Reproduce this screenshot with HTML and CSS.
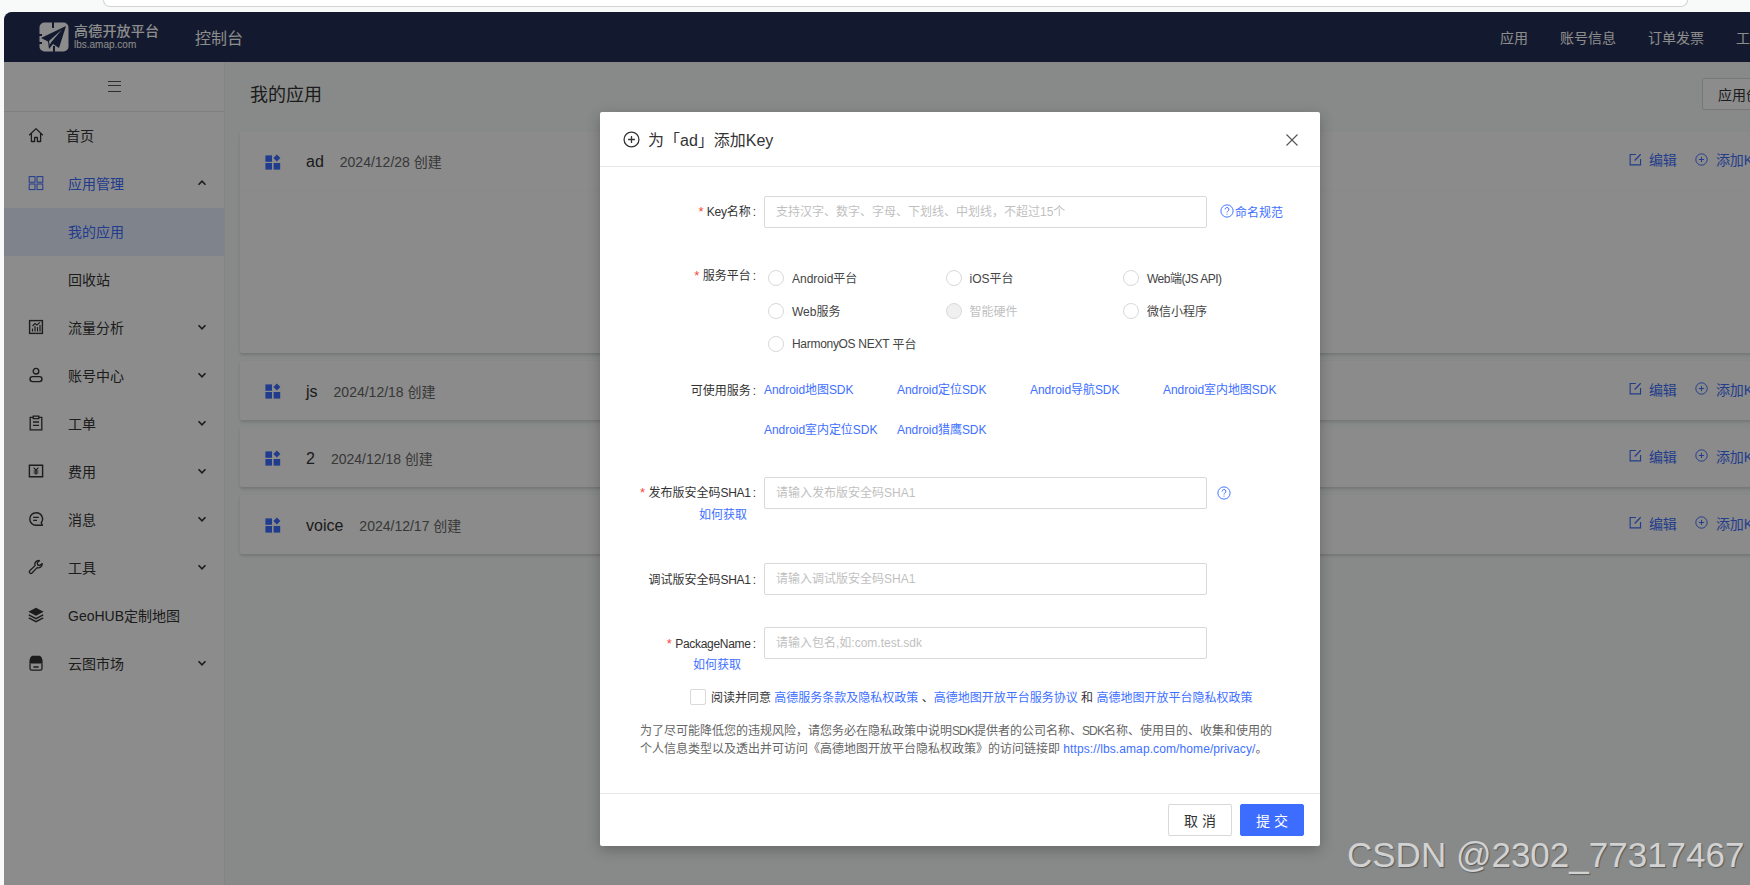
FILE: index.html
```html
<!DOCTYPE html>
<html lang="zh-CN">
<head>
<meta charset="utf-8">
<title>我的应用</title>
<link rel="stylesheet" href="styles.css">
</head>
<body>
<svg class="sprite" aria-hidden="true">
  <symbol id="i-home" viewBox="0 0 16 16"><path d="M1.2 8.2 8 1.6l6.8 6.6M3.4 6.6v7.9h3.2v-4h2.8v4h3.2V6.6" fill="none" stroke="currentColor" stroke-width="1.3" stroke-linejoin="round"/></symbol>
  <symbol id="i-apps" viewBox="0 0 16 16"><g fill="none" stroke="currentColor" stroke-width="1"><rect x="1.2" y="1.6" width="5.8" height="5.6"/><rect x="9" y="1.6" width="5.8" height="5.6"/><rect x="1.2" y="9" width="5.8" height="5.6"/><rect x="9" y="9" width="5.8" height="5.6"/></g></symbol>
  <symbol id="i-chart" viewBox="0 0 16 16"><rect x="1.6" y="1.6" width="12.8" height="12.8" fill="none" stroke="currentColor" stroke-width="1.4"/><path d="M4.5 12.5V9.5M7 12.5V7M9.5 12.5V8M12 12.5V6M4.5 7l2.5-2.4 2 1.4 3-2.6" fill="none" stroke="currentColor" stroke-width="1.2"/></symbol>
  <symbol id="i-user" viewBox="0 0 16 16"><circle cx="8" cy="4.2" r="2.8" fill="none" stroke="currentColor" stroke-width="1.4"/><rect x="2" y="9.6" width="12" height="5" rx="2.5" fill="none" stroke="currentColor" stroke-width="1.4"/></symbol>
  <symbol id="i-order" viewBox="0 0 16 16"><path d="M5 2.4H2.2v12.4h11.6V2.4H11M5.2 1.2h5.6v2.4H5.2zM5 7h6M5 10.4h6" fill="none" stroke="currentColor" stroke-width="1.3"/></symbol>
  <symbol id="i-fee" viewBox="0 0 16 16"><path d="M1.4 2.2h13.2v11.6H1.4z" fill="none" stroke="currentColor" stroke-width="1.4"/><path d="M5.6 4.6 8 7.2l2.4-2.6M8 7.2v4.6M5.6 8h4.8M5.6 10h4.8" fill="none" stroke="currentColor" stroke-width="1.1"/></symbol>
  <symbol id="i-msg" viewBox="0 0 16 16"><path d="M8 1.8a6.2 6.2 0 1 0 0 12.4h6.4l-1.2-2.4A6.2 6.2 0 0 0 8 1.8z" fill="none" stroke="currentColor" stroke-width="1.4" stroke-linejoin="round"/><path d="M5.2 6.4h5.6M5.2 9.4h3.8" fill="none" stroke="currentColor" stroke-width="1.3"/></symbol>
  <symbol id="i-tool" viewBox="0 0 16 16"><path d="M14.2 4.6a3.8 3.8 0 0 1-5 4L4 14a1.6 1.6 0 0 1-2.3-2.2l5.4-5.2a3.8 3.8 0 0 1 4.4-5L9.2 3.9l.5 2.1 2.1.5z" fill="none" stroke="currentColor" stroke-width="1.3" stroke-linejoin="round"/></symbol>
  <symbol id="i-layer" viewBox="0 0 16 16"><path d="M8 .8 15.6 4.8 8 8.8.4 4.8z" fill="currentColor"/><path d="M.8 7.8 8 11.6l7.2-3.8M.8 10.8 8 14.6l7.2-3.8" fill="none" stroke="currentColor" stroke-width="1.4"/></symbol>
  <symbol id="i-store" viewBox="0 0 16 16"><path d="M1.4 7C1.4 2.6 3.4.8 5.2.8h5.6c1.8 0 3.8 1.8 3.8 6.2v1.6H1.4z" fill="currentColor"/><path d="M2 8.4v5c0 1 .8 1.8 1.8 1.8h8.4c1 0 1.8-.8 1.8-1.8v-5M5.4 12h5.2" fill="none" stroke="currentColor" stroke-width="1.3"/></symbol>
  <symbol id="i-grid" viewBox="0 0 16 16"><rect x="0.4" y="1.4" width="6.6" height="6.4" fill="currentColor"/><rect x="0.4" y="9" width="6.6" height="6.6" fill="currentColor"/><rect x="8.6" y="9" width="6.6" height="6.6" fill="currentColor"/><path d="M11.9 0.4 15.4 4 11.9 7.6 8.4 4z" fill="currentColor"/></symbol>
  <symbol id="i-edit" viewBox="0 0 16 16"><path d="M8.5 1.8H1.4v12.8h12.8V7.5" fill="none" stroke="currentColor" stroke-width="1.4"/><path d="M7 9.2 14.4 1.6" fill="none" stroke="currentColor" stroke-width="1.5"/></symbol>
  <symbol id="i-plus" viewBox="0 0 16 16"><circle cx="8" cy="8" r="7" fill="none" stroke="currentColor" stroke-width="1.2"/><path d="M4.8 8h6.4M8 4.8v6.4" fill="none" stroke="currentColor" stroke-width="1.2"/></symbol>
  <symbol id="i-help" viewBox="0 0 16 16"><circle cx="8" cy="8" r="7" fill="none" stroke="currentColor" stroke-width="1.1"/><path d="M5.8 6.2A2.2 2.2 0 1 1 8.9 8.2c-.6.3-.9.7-.9 1.5M8 11v1.1" fill="none" stroke="currentColor" stroke-width="1.1"/></symbol>
  <symbol id="i-down" viewBox="0 0 10 10"><path d="M1.5 3.2 5 6.8l3.5-3.6" fill="none" stroke="currentColor" stroke-width="1.6"/></symbol>
  <symbol id="i-up" viewBox="0 0 10 10"><path d="M1.5 6.8 5 3.2l3.5 3.6" fill="none" stroke="currentColor" stroke-width="1.6"/></symbol>
</svg>

<div class="browser-strip"><div class="url-bar"></div></div>

<div class="app">
  <header class="topbar">
    <div class="logo">
      <svg class="logo-mark" viewBox="0 0 30 30" aria-hidden="true">
        <rect x="0.5" y="0.5" width="29" height="29" rx="5" fill="#fff"/>
        <path d="M27 4 2 16l7 3.5 1 7.5 4-5 6 4z" fill="#242f54"/>
        <path d="M23 7.5 10 19l.6 4 1.4-2.4z" fill="#fff"/>
        <path d="M14 0v6M15 24v6M0 13h3M0 21h3" stroke="#242f54" stroke-width="2"/>
      </svg>
      <div class="logo-text">
        <div class="logo-cn">高德开放平台</div>
        <div class="logo-en">lbs.amap.com</div>
      </div>
    </div>
    <div class="console">控制台</div>
    <nav class="topnav">
      <a>应用</a><a>账号信息</a><a>订单发票</a><a>工单</a>
    </nav>
  </header>

  <div class="body">
    <aside class="sidebar">
      <div class="collapse"><span class="burger"></span></div>
      <ul class="menu">
        <li class="item first"><svg class="ic"><use href="#i-home"/></svg><span>首页</span></li>
        <li class="item on"><svg class="ic"><use href="#i-apps"/></svg><span>应用管理</span><svg class="arrow"><use href="#i-up"/></svg></li>
        <li class="item sub selected"><span>我的应用</span></li>
        <li class="item sub"><span>回收站</span></li>
        <li class="item"><svg class="ic"><use href="#i-chart"/></svg><span>流量分析</span><svg class="arrow"><use href="#i-down"/></svg></li>
        <li class="item"><svg class="ic"><use href="#i-user"/></svg><span>账号中心</span><svg class="arrow"><use href="#i-down"/></svg></li>
        <li class="item"><svg class="ic"><use href="#i-order"/></svg><span>工单</span><svg class="arrow"><use href="#i-down"/></svg></li>
        <li class="item"><svg class="ic"><use href="#i-fee"/></svg><span>费用</span><svg class="arrow"><use href="#i-down"/></svg></li>
        <li class="item"><svg class="ic"><use href="#i-msg"/></svg><span>消息</span><svg class="arrow"><use href="#i-down"/></svg></li>
        <li class="item"><svg class="ic"><use href="#i-tool"/></svg><span>工具</span><svg class="arrow"><use href="#i-down"/></svg></li>
        <li class="item"><svg class="ic"><use href="#i-layer"/></svg><span>GeoHUB定制地图</span></li>
        <li class="item"><svg class="ic"><use href="#i-store"/></svg><span>云图市场</span><svg class="arrow"><use href="#i-down"/></svg></li>
      </ul>
    </aside>

    <main class="main">
      <div class="main-head">
        <h1 class="page-title">我的应用</h1>
        <button class="create-btn">应用创建</button>
      </div>
      <section class="card card-open">
        <div class="card-head">
          <svg class="card-ic"><use href="#i-grid"/></svg>
          <span class="name">ad</span><span class="date">2024/12/28 创建</span>
          <div class="actions"><svg class="act-ic"><use href="#i-edit"/></svg><a>编辑</a><svg class="act-ic add"><use href="#i-plus"/></svg><a>添加Key</a></div>
        </div>
      </section>
      <section class="card">
        <div class="card-head">
          <svg class="card-ic"><use href="#i-grid"/></svg>
          <span class="name">js</span><span class="date">2024/12/18 创建</span>
          <div class="actions"><svg class="act-ic"><use href="#i-edit"/></svg><a>编辑</a><svg class="act-ic add"><use href="#i-plus"/></svg><a>添加Key</a></div>
        </div>
      </section>
      <section class="card">
        <div class="card-head">
          <svg class="card-ic"><use href="#i-grid"/></svg>
          <span class="name">2</span><span class="date">2024/12/18 创建</span>
          <div class="actions"><svg class="act-ic"><use href="#i-edit"/></svg><a>编辑</a><svg class="act-ic add"><use href="#i-plus"/></svg><a>添加Key</a></div>
        </div>
      </section>
      <section class="card">
        <div class="card-head">
          <svg class="card-ic"><use href="#i-grid"/></svg>
          <span class="name">voice</span><span class="date">2024/12/17 创建</span>
          <div class="actions"><svg class="act-ic"><use href="#i-edit"/></svg><a>编辑</a><svg class="act-ic add"><use href="#i-plus"/></svg><a>添加Key</a></div>
        </div>
      </section>
    </main>
  </div>

  <div class="overlay"></div>

  <div class="modal">
    <div class="modal-head">
      <svg class="modal-ic"><use href="#i-plus"/></svg>
      <span class="modal-title">为「ad」添加Key</span>
      <svg class="close" viewBox="0 0 12 12"><path d="M.5.5l11 11M11.5.5l-11 11" fill="none" stroke="currentColor" stroke-width="1.1"/></svg>
    </div>
    <form class="form">
      <div class="row">
        <div class="lab"><label><i>*</i> <span class="tight">Key</span>名称<b>:</b></label></div>
        <div class="ctl">
          <input class="inp" placeholder="支持汉字、数字、字母、下划线、中划线，不超过15个">
          <a class="hint"><svg class="help"><use href="#i-help"/></svg>命名规范</a>
        </div>
      </div>
      <div class="row row-radio">
        <div class="lab lab-radio"><label><i>*</i> 服务平台<b>:</b></label></div>
        <div class="radios">
          <span class="radio"><em></em>Android平台</span>
          <span class="radio"><em></em>iOS平台</span>
          <span class="radio"><em></em><span class="tight-more">Web端(JS API)</span></span>
          <span class="radio"><em></em>Web服务</span>
          <span class="radio off"><em></em>智能硬件</span>
          <span class="radio"><em></em>微信小程序</span>
          <span class="radio"><em></em><span class="tight">HarmonyOS NEXT</span> 平台</span>
        </div>
      </div>
      <div class="row row-svc">
        <div class="lab lab-svc"><label>可使用服务<b>:</b></label></div>
        <div class="svcs">
          <a>Android地图SDK</a><a>Android定位SDK</a><a>Android导航SDK</a><a>Android室内地图SDK</a>
          <a>Android室内定位SDK</a><a>Android猎鹰SDK</a>
        </div>
      </div>
      <div class="row row-rel">
        <div class="lab">
          <label><i>*</i> 发布版安全码<span class="tight">SHA1</span><b>:</b></label>
          <a class="how how-a">如何获取</a>
        </div>
        <div class="ctl">
          <input class="inp" placeholder="请输入发布版安全码SHA1">
          <svg class="help help-solo"><use href="#i-help"/></svg>
        </div>
      </div>
      <div class="row row-dbg">
        <div class="lab"><label>调试版安全码<span class="tight">SHA1</span><b>:</b></label></div>
        <div class="ctl"><input class="inp" placeholder="请输入调试版安全码SHA1"></div>
      </div>
      <div class="row row-pkg">
        <div class="lab">
          <label><i>*</i> <span class="tight">PackageName</span><b>:</b></label>
          <a class="how how-b">如何获取</a>
        </div>
        <div class="ctl"><input class="inp" placeholder="请输入包名,如:com.test.sdk"></div>
      </div>
      <div class="agree">
        <span class="check"></span>
        <span class="agree-text">阅读并同意 <a>高德服务条款及隐私权政策</a> 、<a>高德地图开放平台服务协议</a> 和 <a>高德地图开放平台隐私权政策</a></span>
      </div>
      <p class="note">为了尽可能降低您的违规风险，请您务必在隐私政策中说明<span class="sdk">SDK</span>提供者的公司名称、<span class="sdk">SDK</span>名称、使用目的、收集和使用的个人信息类型以及透出并可访问《高德地图开放平台隐私权政策》的访问链接即 <a class="url">https://lbs.amap.com/home/privacy/</a>。</p>
    </form>
    <div class="modal-foot">
      <button class="btn">取 消</button>
      <button class="btn primary">提 交</button>
    </div>
  </div>
</div>

<div class="watermark">CSDN @2302_77317467</div>
</body>
</html>
```
FILE: styles.css
```css
* { box-sizing: border-box; }
html, body { margin: 0; height: 885px; overflow: hidden; }
body {
  background: #f8f9f9;
  font-family: "Liberation Sans", "Noto Sans CJK SC", sans-serif;
  font-size: 14px;
  color: #333;
  position: relative;
  width: 1750px;
}
a { color: #4070ff; text-decoration: none; }
ul { list-style: none; margin: 0; padding: 0; }
.sprite { display: none; }

.browser-strip { height: 12px; }
.url-bar {
  margin: 0 62px 0 103px;
  height: 7px;
  background: #fff;
  border: 1px solid #d4d4d4;
  border-top: 0;
  border-radius: 0 0 10px 10px;
}

.app {
  position: relative;
  margin-left: 4px;
  width: 1802px;
  height: 873px;
  border-top-left-radius: 8px;
  overflow: hidden;
  display: flex;
  flex-direction: column;
  background: #f7fbf9;
}

.topbar {
  height: 50px;
  flex: none;
  background: #242f54;
  display: flex;
  align-items: center;
  padding-left: 35px;
  color: #fff;
}
.logo { display: flex; align-items: center; gap: 5px; }
.logo-mark { width: 30px; height: 30px; display: block; }
.logo-text { width: 86px; margin-top: -1px; }
.logo-cn { font-size: 14px; line-height: 15px; font-weight: 500; letter-spacing: .2px; white-space: nowrap; }
.logo-en { font-size: 10px; line-height: 11px; white-space: nowrap; }
.console { font-size: 16px; margin-left: 35px; }
.topnav { margin-left: auto; padding-right: 42px; display: flex; gap: 32px; }
.topnav a { color: #fff; }

.body { flex: 1; display: flex; min-height: 0; }

.sidebar {
  width: 220px;
  flex: none;
  background: #fff;
}
.collapse {
  height: 50px;
  border-bottom: 1px solid #e8e8e8;
  display: flex;
  align-items: center;
  justify-content: center;
}
.burger {
  width: 13px;
  height: 11px;
  margin-bottom: 1px;
  border-top: 1.5px solid #555;
  border-bottom: 1.5px solid #555;
  position: relative;
}
.burger::after {
  content: "";
  position: absolute;
  left: 0; right: 0; top: 3.5px;
  border-top: 1.5px solid #555;
}
.item {
  height: 48px;
  display: flex;
  align-items: center;
  padding-left: 24px;
  position: relative;
}
.item span { margin-top: -2px; }
.ic { width: 16px; height: 16px; flex: none; margin-right: 24px; margin-top: -2px; color: #333; }
.item.first span { margin-left: -2px; }
.item.on, .item.on .ic, .item.selected { color: #3d6dff; }
.item.sub { padding-left: 64px; }
.item.selected { background: #e7f0ff; }
.arrow { width: 10px; height: 10px; position: absolute; left: 193px; top: 18px; color: #333; }

.main { flex: 1; min-width: 0; padding: 16px 16px 0 15px; border-left: 1px solid #f0f0f0; }
.main-head { display: flex; justify-content: space-between; align-items: center; height: 32px; margin-bottom: 22px; padding-left: 10px; }
.page-title { font-size: 18px; font-weight: 400; margin: -2px 0 0; color: #333; }
.create-btn {
  height: 32px;
  width: 88px;
  background: #fff;
  border: 1px solid #d9d9d9;
  border-radius: 2px;
  font: inherit;
  color: #333;
  padding: 0;
}
.card {
  background: #fdfdfd;
  height: 59px;
  margin-bottom: 8px;
  box-shadow: 0 2px 3px rgba(0,0,0,.14);
  border-radius: 2px;
}
.card-open { height: 221px; }
.card-head {
  height: 59px;
  display: flex;
  align-items: center;
  padding: 0 22px 0 25px;
}
.card-open .card-head { border-bottom: 1px solid #f9f9f9; }
.card-ic { width: 16px; height: 16px; color: #3d6dff; flex: none; margin-right: 25px; margin-top: 1px; }
.name { font-size: 16px; color: #333; margin: 2px 16px 0 0; }
.date { color: #666; }
.actions { margin-left: auto; display: flex; align-items: center; margin-bottom: 4px; }
.act-ic { width: 13px; height: 13px; color: #3d6dff; margin-right: 7px; flex: none; }
.act-ic.add { margin: 0 8px 0 18px; }

.overlay { position: absolute; inset: 0; background: rgba(0,0,0,.45); }

.modal {
  position: absolute;
  left: 596px;
  top: 100px;
  width: 720px;
  height: 734px;
  background: #fff;
  border-radius: 2px;
  box-shadow: 0 4px 14px rgba(0,0,0,.25);
  display: flex;
  flex-direction: column;
  font-size: 12px;
}
.modal-head {
  height: 55px;
  flex: none;
  border-bottom: 1px solid #e8e8e8;
  display: flex;
  align-items: center;
  padding: 0 22px 0 23px;
  color: #333;
}
.modal-ic { width: 17px; height: 17px; margin-right: 8px; color: #333; }
.modal-title { font-size: 16px; }
.close { width: 12px; height: 12px; margin: 2px 0 0 auto; color: #555; }

.form { flex: 1; padding-top: 29px; }
.row { display: grid; grid-template-columns: 156px 1fr; column-gap: 8px; }
.lab { display: flex; flex-direction: column; align-items: flex-end; }
.lab label { line-height: 32px; white-space: nowrap; color: #333; }
.lab b { font-weight: 400; margin-left: 2px; }
.lab i { color: #f5483b; font-style: normal; font-size: 13px; }
.tight { letter-spacing: -.3px; }
.tight-more { letter-spacing: -.5px; }
.ctl { display: flex; align-items: flex-start; }
.inp {
  width: 443px;
  height: 32px;
  flex: none;
  border: 1px solid #d9d9d9;
  border-radius: 2px;
  padding: 0 11px;
  font: inherit;
  color: #333;
  outline: 0;
}
.inp::placeholder { color: #bfbfbf; }
.hint { display: flex; align-items: center; height: 30px; margin-left: 13px; }
.help { width: 14px; height: 14px; color: #4070ff; flex: none; margin-right: 1px; }
.help-solo { margin: 9px 0 0 10px; }

.row-radio { margin-top: 33px; }
.lab-radio label { line-height: 30px; }
.radios { display: grid; grid-template-columns: repeat(3, 177.5px); padding-left: 4px; }
.radio { height: 33px; display: flex; align-items: center; color: #444; white-space: pre; }
.radio em {
  width: 16px;
  height: 16px;
  border: 1px solid #d9d9d9;
  border-radius: 50%;
  margin-right: 8px;
  flex: none;
}
.radio.off { color: #bfbfbf; }
.radio.off em { background: #f0f0f0; }

.row-svc { margin-top: 10px; }
.lab-svc label { line-height: 42px; }
.svcs { display: grid; grid-template-columns: repeat(4, 133px); grid-auto-rows: 40px; align-items: center; margin-top: -2px; }
.svcs a { white-space: nowrap; letter-spacing: -.05px; }

.row-rel { margin-top: 29px; }
.how { line-height: 20px; }
.how-a { margin: -4px 9px 0 0; }
.how-b { margin: -6px 15px 0 0; }
.row-dbg { margin-top: 38px; }
.row-pkg { margin-top: 30px; }
.row-dbg label, .row-pkg label { line-height: 34px; }

.agree { margin: 14px 0 0 90px; display: flex; align-items: center; gap: 5px; height: 16px; color: #333; white-space: nowrap; }
.agree-text { margin-top: -1px; }
.check { width: 16px; height: 16px; border: 1px solid #d9d9d9; border-radius: 2px; flex: none; }
.note { margin: 17px 0 0 40px; width: 638px; line-height: 18px; color: #666; }
.sdk { letter-spacing: -.9px; }
.url { letter-spacing: .1px; }

.modal-foot {
  height: 53px;
  flex: none;
  border-top: 1px solid #e8e8e8;
  display: flex;
  justify-content: flex-end;
  align-items: flex-start;
  gap: 8px;
  padding: 10px 16px 0 0;
}
.btn {
  width: 64px;
  height: 32px;
  padding: 0;
  font: inherit;
  font-size: 14px;
  background: #fff;
  color: #333;
  border: 1px solid #d9d9d9;
  border-radius: 2px;
}
.btn.primary { background: #3d6dff; border-color: #3d6dff; color: #fff; }

.watermark {
  position: absolute;
  left: 1347px;
  top: 835px;
  font-family: "Liberation Sans", sans-serif;
  font-size: 35px;
  line-height: 39px;
  color: #d2d2d2;
  text-shadow: 1px 1px 1px rgba(0,0,0,.35);
  white-space: nowrap;
}
```
